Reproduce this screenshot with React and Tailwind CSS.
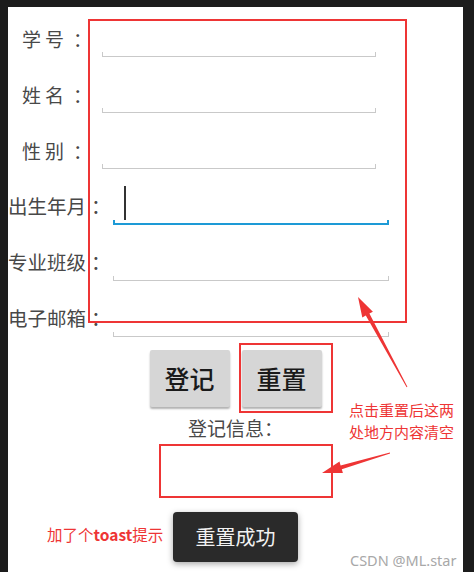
export default function App() {
  const rowsA = [
    ["学", "号"],
    ["姓", "名"],
    ["性", "别"],
  ];
  const rowsB = ["出生年月", "专业班级", "电子邮箱"];
  const cjk = "font-['Noto_Sans_CJK_SC','Noto_Sans',sans-serif]";
  return (
    <div className={`w-[474px] h-[572px] bg-[#1c1c1c] pt-[7px] pl-[8px] pr-[11px] overflow-hidden ${cjk}`}>
      <div className="relative w-full h-[565px] bg-white pt-[3px] flex flex-col">
        {rowsA.map(([a, b], i) => (
          <div key={i} className="h-[56px] flex items-center">
            <div className="w-[94px] pl-[14px] flex items-center text-[19px] leading-none text-[#484848]">
              <span>{a}</span>
              <span className="ml-[4px]">{b}</span>
              <span className="ml-[9px]">：</span>
            </div>
            <div className="h-full w-[274px] flex flex-col justify-end pb-[9px]">
              <div className="h-[5px] border-b-[1.5px] border-l border-r border-[#c9c9c9]"></div>
            </div>
          </div>
        ))}
        {rowsB.map((t, i) => (
          <div key={t} className="h-[56px] flex items-center">
            <div className="w-[105px] flex items-center text-[19.5px] leading-none text-[#484848]">
              <span>{t}</span>
              <span className="ml-[5px]">：</span>
            </div>
            <div className="relative h-full w-[276px] flex flex-col justify-end pb-[9px]">
              {i === 0 ? (
                <>
                  <div className="absolute left-[11px] top-[8px] w-[2px] h-[34px] bg-[#333]"></div>
                  <div className="h-[5px] border-b-2 border-l-2 border-r-2 border-[#1d9ad6]"></div>
                </>
              ) : (
                <div className="h-[5px] border-b-[1.5px] border-l border-r border-[#c9c9c9]"></div>
              )}
            </div>
          </div>
        ))}
        <div className="mt-[4px] flex justify-center gap-[12px]">
          <button className="w-[80px] h-[57px] bg-[#d6d6d6] rounded-[2px] shadow-[0_2px_2px_rgba(0,0,0,0.3)] text-[25px] font-medium text-[#1a1a1a] flex items-center justify-center">
            登记
          </button>
          <button className="w-[80px] h-[57px] bg-[#d6d6d6] rounded-[2px] shadow-[0_2px_2px_rgba(0,0,0,0.3)] text-[25px] font-medium text-[#1a1a1a] flex items-center justify-center">
            重置
          </button>
        </div>
        <div className="mt-[9px] text-center text-[19px] leading-[24px] text-[#484848]">登记信息：</div>
        <div className="mt-[72px] flex justify-center">
          <div className="w-[125px] h-[50px] bg-[#2a2a2a] rounded-[4px] shadow-[0_2px_6px_rgba(0,0,0,0.35)] flex items-center justify-center text-[20px] text-[#f2f2f2]">
            重置成功
          </div>
        </div>

        {/* annotations */}
        <div className="absolute left-[80px] top-[12px] w-[319px] h-[304px] border-2 border-[#ee3535]"></div>
        <div className="absolute left-[231px] top-[336px] w-[94px] h-[70px] border-2 border-[#ee3535]"></div>
        <div className="absolute left-[151px] top-[437px] w-[174px] h-[54px] border-2 border-[#ee3535]"></div>
        <svg className="absolute left-0 top-0" width="455" height="565" viewBox="0 0 455 565">
          <polygon
            fill="#ee3535"
            points="350,290 364.9,304.7 361.4,306.6 399.4,379.8 398.6,380.2 357.8,308.6 354.3,310.5"
          />
          <polygon
            fill="#ee3535"
            points="314,466 334.9,466.1 333.8,462.3 382.1,446.5 381.9,445.5 332.6,458.5 331.5,454.6"
          />
        </svg>
        <div className="absolute left-[341px] top-[392px] text-[15px] leading-[22px] text-[#ee3535]">
          <div>点击重置后这两</div>
          <div>处地方内容清空</div>
        </div>
        <div className="absolute left-[39px] top-[517px] text-[15.5px] leading-[20px] text-[#ee3535]">
          加了个<span className="font-semibold">toast</span>提示
        </div>
        <div className="absolute left-[342px] top-[544px] text-[14.5px] leading-[18px] text-[#a8a8a8] font-['Noto_Sans',sans-serif]">CSDN @ML.star</div>
      </div>
    </div>
  );
}
